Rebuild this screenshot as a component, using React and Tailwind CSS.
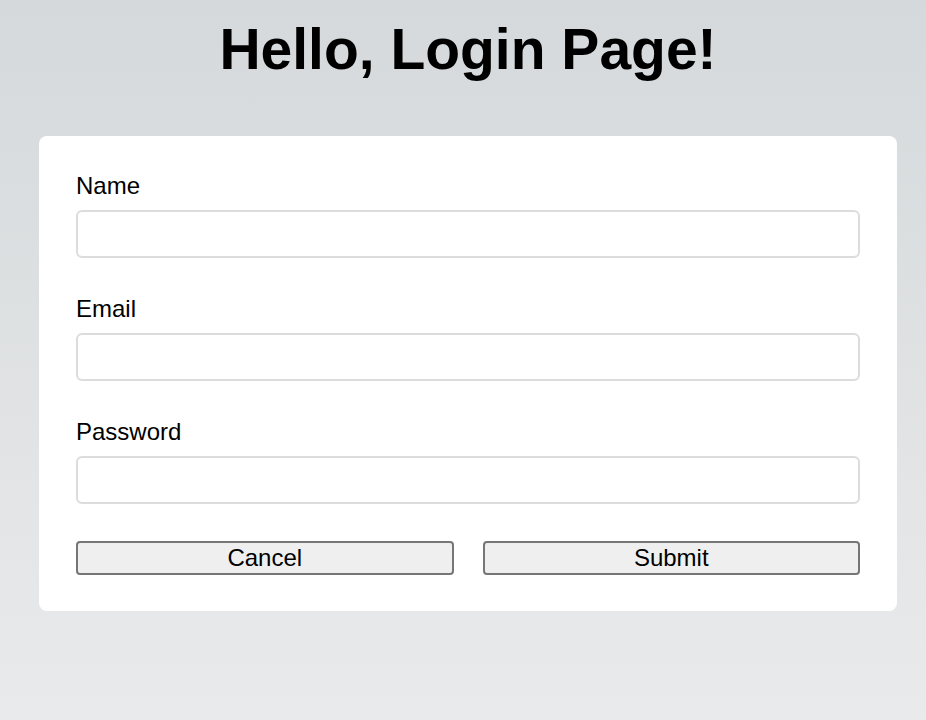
export default function App() {
  const font = { fontFamily: '"Liberation Sans", Arial, Helvetica, sans-serif' };
  return (
    <div
      className="min-h-[720px] w-full bg-gradient-to-b from-[#d5d9db] to-[#e9eaeb] pt-[16px] pb-10"
      style={font}
    >
      <div className="ml-[39px] mr-[29px]">
        <h1 className="text-center text-[57px] leading-[66px] font-bold text-black">Hello, Login Page!</h1>
        <form
          className="mt-[54px] bg-white rounded-[8px] px-[37px] pt-[36px] pb-[36px] flex flex-col"
          onSubmit={(e) => e.preventDefault()}
        >
          {["Name", "Email", "Password"].map((label, i) => (
            <div key={label} className={i === 0 ? "flex flex-col" : "flex flex-col mt-[37px]"}>
              <label className="text-[24px] leading-[28px] text-black">{label}</label>
              <input
                type={label === "Password" ? "password" : label === "Email" ? "email" : "text"}
                className="mt-[10px] h-[48px] w-full rounded-[6px] border-2 border-[#dcdcdc] bg-white px-3 text-[20px] outline-none"
              />
            </div>
          ))}
          <div className="mt-[37px] grid grid-cols-2 gap-[29px]">
            <button
              type="button"
              className="h-[34px] rounded-[4px] border-2 border-[#767676] bg-[#efefef] text-[24px] leading-[28px] text-black"
            >
              Cancel
            </button>
            <button
              type="submit"
              className="h-[34px] rounded-[4px] border-2 border-[#767676] bg-[#efefef] text-[24px] leading-[28px] text-black"
            >
              Submit
            </button>
          </div>
        </form>
      </div>
    </div>
  );
}
